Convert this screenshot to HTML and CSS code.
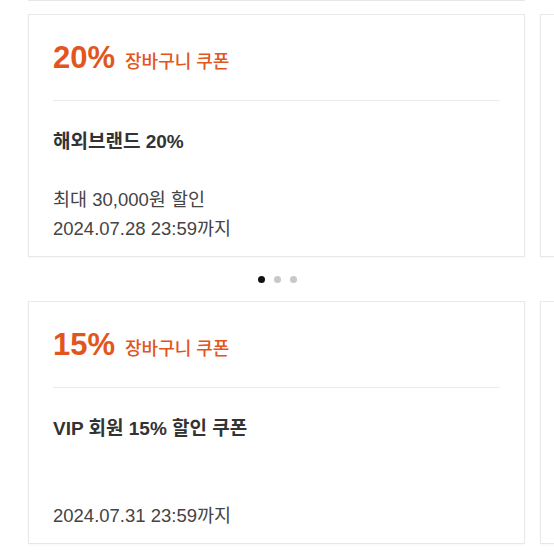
FILE: index.html
```html
<!DOCTYPE html>
<html lang="ko">
<head>
    <meta charset="UTF-8">
    <meta name="viewport" content="width=device-width, initial-scale=1.0">
    <title>장바구니 쿠폰</title>
    <link rel="stylesheet" href="styles.css">
</head>
<body>
    <div class="coupon-list">
        <!-- bottom edge of the card above -->
        <div class="card-edge"></div>

        <section class="coupon-slider">
            <div class="slider-track">
                <div class="coupon-card">
                    <div class="coupon-head">
                        <span class="coupon-rate">20%</span>
                        <span class="coupon-type">장바구니 쿠폰</span>
                    </div>
                    <div class="coupon-body">
                        <p class="coupon-name">해외브랜드 20%</p>
                        <div class="coupon-info">
                            <p>최대 30,000원 할인</p>
                            <p>2024.07.28 23:59까지</p>
                        </div>
                    </div>
                </div>
                <div class="coupon-card"></div>
                <div class="coupon-card"></div>
            </div>
            <div class="slider-dots">
                <span class="dot active"></span>
                <span class="dot"></span>
                <span class="dot"></span>
            </div>
        </section>

        <section class="coupon-slider">
            <div class="slider-track">
                <div class="coupon-card">
                    <div class="coupon-head">
                        <span class="coupon-rate">15%</span>
                        <span class="coupon-type">장바구니 쿠폰</span>
                    </div>
                    <div class="coupon-body">
                        <p class="coupon-name">VIP 회원 15% 할인 쿠폰</p>
                        <div class="coupon-info">
                            <p>2024.07.31 23:59까지</p>
                        </div>
                    </div>
                </div>
                <div class="coupon-card"></div>
            </div>
            <div class="slider-dots">
                <span class="dot active"></span>
                <span class="dot"></span>
            </div>
        </section>
    </div>
</body>
</html>
```

FILE: styles.css
```css
body {
    margin: 0;
    background-color: #fff;
    font-family: "Liberation Sans", "Noto Sans CJK KR", sans-serif;
    color: #333;
    overflow: hidden;
}
p {
    margin: 0;
}
.card-edge {
    width: 497px;
    margin-left: 28px;
    margin-bottom: 13px;
    border-bottom: 1px solid #e8e8e8;
}
.coupon-slider {
    overflow: hidden;
}
.slider-track {
    display: flex;
    gap: 15px;
    padding-left: 28px;
}
.coupon-card {
    flex: 0 0 497px;
    box-sizing: border-box;
    background-color: #fff;
    border: 1px solid #e8e8e8;
    box-shadow: 0 1px 2px rgba(0, 0, 0, 0.03);
}
.coupon-head {
    box-sizing: border-box;
    height: 85px;
    padding: 26px 24px 0;
    display: flex;
    align-items: baseline;
    gap: 10px;
    line-height: 34px;
    color: #e2561d;
}
.coupon-rate {
    font-size: 31px;
    font-weight: bold;
}
.coupon-type {
    font-size: 18px;
    font-weight: 500;
}
.coupon-body {
    margin: 0 24px;
    padding: 28px 0 13px;
    border-top: 1px solid #ebebeb;
}
.coupon-name {
    font-size: 19px;
    font-weight: bold;
    line-height: 26px;
    color: #333;
}
.coupon-info {
    margin-top: 30px;
    min-height: 58px;
    display: flex;
    flex-direction: column;
    justify-content: flex-end;
    font-size: 18.5px;
    line-height: 29px;
    color: #444;
}
.slider-dots {
    height: 44px;
    display: flex;
    justify-content: center;
    align-items: center;
    gap: 9px;
}
.dot {
    width: 7px;
    height: 7px;
    border-radius: 50%;
    background-color: #c8c8c8;
}
.dot.active {
    background-color: #111;
}
```
